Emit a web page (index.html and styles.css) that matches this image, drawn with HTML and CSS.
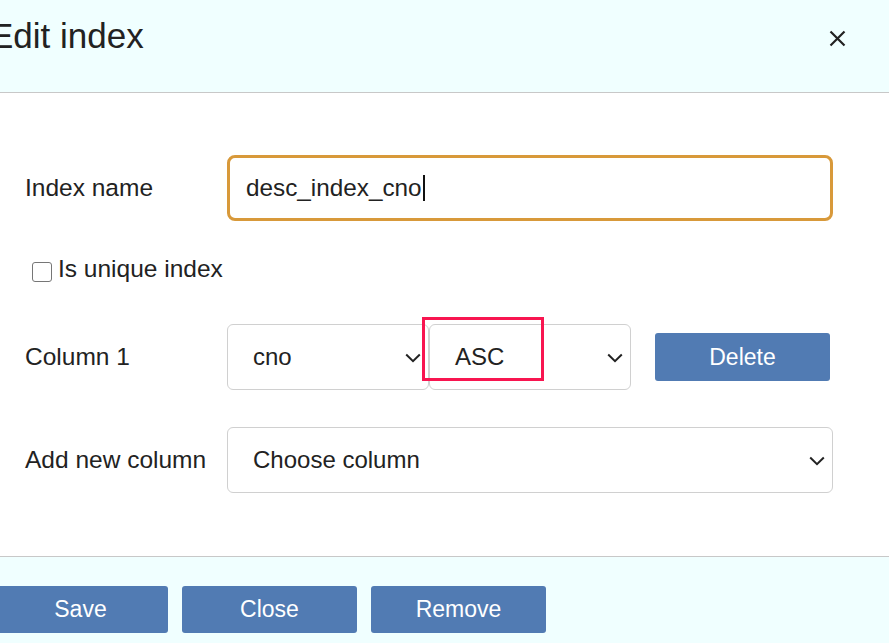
FILE: index.html
```html
<!DOCTYPE html>
<html lang="en">
<head>
<meta charset="utf-8">
<title>Edit index</title>
<link rel="stylesheet" href="styles.css">
</head>
<body>
<div class="modal">
  <div class="modal-header">
    <h1 class="modal-title">Edit index</h1>
    <button class="close-btn" aria-label="Close">
      <svg width="17" height="17" viewBox="0 0 17 17"><path d="M1.5 1.5 L15.5 15.5 M15.5 1.5 L1.5 15.5" stroke="#222" stroke-width="2.2" fill="none"/></svg>
    </button>
  </div>
  <div class="modal-body">
    <div class="form-row row-name">
      <label class="field-label">Index name</label>
      <div class="text-input"><span>desc_index_cno</span><span class="caret"></span></div>
    </div>
    <div class="check-row">
      <input type="checkbox" class="checkbox" id="uniq">
      <label for="uniq" class="check-label">Is unique index</label>
    </div>
    <div class="form-row row-col">
      <label class="field-label">Column 1</label>
      <div class="col-fields">
        <div class="select half"><span>cno</span><svg class="chev" width="16" height="10" viewBox="0 0 16 10"><polyline points="1.2,1.5 8,8.2 14.8,1.5" fill="none" stroke="#222" stroke-width="2"/></svg></div>
        <div class="select half"><span>ASC</span><svg class="chev" width="16" height="10" viewBox="0 0 16 10"><polyline points="1.2,1.5 8,8.2 14.8,1.5" fill="none" stroke="#222" stroke-width="2"/></svg></div>
        <button class="btn btn-delete">Delete</button>
        <div class="highlight"></div>
      </div>
    </div>
    <div class="form-row row-add">
      <label class="field-label">Add new column</label>
      <div class="select full"><span>Choose column</span><svg class="chev" width="16" height="10" viewBox="0 0 16 10"><polyline points="1.2,1.5 8,8.2 14.8,1.5" fill="none" stroke="#222" stroke-width="2"/></svg></div>
    </div>
  </div>
  <div class="modal-footer">
    <button class="btn">Save</button>
    <button class="btn">Close</button>
    <button class="btn">Remove</button>
  </div>
</div>
</body>
</html>
```

FILE: styles.css
```css
html, body {
  margin: 0;
  padding: 0;
  height: 643px;
  overflow: hidden;
  background: #fff;
}
body {
  font-family: "Liberation Sans", Arial, sans-serif;
  color: #222;
}
.modal {
  width: 905px;
  margin-left: -16px;
}
.modal-header {
  height: 92px;
  box-sizing: content-box;
  background: #f0ffff;
  border-bottom: 1px solid #c8c8c8;
  display: flex;
  align-items: flex-start;
  padding: 0 43px 0 6px;
}
.modal-title {
  margin: 16px 0 0 0;
  font-size: 35px;
  font-weight: normal;
  line-height: 40px;
  color: #222;
}
.close-btn {
  margin-left: auto;
  margin-top: 30px;
  padding: 0;
  border: 0;
  background: transparent;
  width: 17px;
  height: 17px;
  display: block;
}
.close-btn svg { display: block; }
.modal-body {
  padding: 62px 56px 63px 41px;
  display: flex;
  flex-direction: column;
}
.form-row {
  display: grid;
  grid-template-columns: 202px 606px;
  align-items: center;
  height: 66px;
}
.field-label {
  font-size: 24.5px;
  line-height: 28px;
  color: #222;
}
.text-input {
  box-sizing: border-box;
  height: 66px;
  border: 3px solid #d8993a;
  border-radius: 8px;
  padding-left: 16px;
  font-size: 24.3px;
  display: flex;
  align-items: center;
  color: #222;
}
.caret {
  display: inline-block;
  width: 0;
  height: 26px;
  border-left: 2px solid #111;
  margin-left: 1px;
  margin-top: -1px;
}
.check-row {
  margin-top: 33px;
  height: 28px;
  display: flex;
  align-items: flex-start;
}
.checkbox {
  appearance: none;
  -webkit-appearance: none;
  box-sizing: border-box;
  width: 20px;
  height: 20px;
  margin: 8px 6px 0 7px;
  border: 1.5px solid #767676;
  border-radius: 3px;
  background: #fff;
}
.check-label {
  font-size: 24.5px;
  line-height: 28px;
  margin-top: 1px;
}
.row-col { margin-top: 42px; }
.row-add { margin-top: 37px; }
.col-fields {
  position: relative;
  display: flex;
  align-items: center;
  height: 66px;
}
.select {
  box-sizing: border-box;
  height: 66px;
  border: 1px solid #d0d0d0;
  border-radius: 6px;
  background: #fff;
  display: flex;
  align-items: center;
  justify-content: space-between;
  padding: 0 7px 0 25px;
  font-size: 24px;
  color: #222;
}
.select .chev { display: block; margin-top: 2px; }
.half { width: 202px; }
.full { width: 606px; }
.btn {
  width: 175px;
  height: 47px;
  border: 0;
  border-radius: 3px;
  background: #517bb3;
  color: #fff;
  font-family: "Liberation Sans", Arial, sans-serif;
  font-size: 23px;
  padding: 0;
}
.btn-delete { margin-left: 24px; height: 48px; }
.highlight {
  position: absolute;
  left: 195px;
  top: -7px;
  width: 122px;
  height: 64px;
  box-sizing: border-box;
  border: 3px solid #f81550;
}
.modal-footer {
  border-top: 1px solid #c8c8c8;
  background: #f0ffff;
  padding: 29px 0 40px 9px;
  display: flex;
  gap: 14px;
}
```
